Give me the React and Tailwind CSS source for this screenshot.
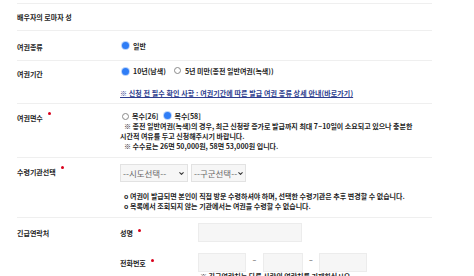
import React from "react";
import { ChevronDown } from "lucide-react";

const font = { fontFamily: '"Noto Sans CJK KR", "Noto Sans", sans-serif' };

function Radio({ checked }) {
  return checked ? (
    <span className="inline-flex w-[7px] h-[7px] rounded-full bg-[#2f7df6] ring-1 ring-[#b9d3fb] shrink-0" />
  ) : (
    <span className="inline-flex w-[7px] h-[7px] rounded-full border border-[#8a8a8a] bg-white shrink-0" />
  );
}

function Dot({ up = 1 }) {
  return (
    <span
      className={
        "inline-block w-[3px] h-[3px] rounded-full bg-[#d9001b] ml-[5px] shrink-0 " +
        (up === 1 ? "mt-[-1px]" : "mt-[-4px]")
      }
    />
  );
}

function Label({ children, req }) {
  return (
    <div className="flex items-start">
      <span>{children}</span>
      {req && <Dot />}
    </div>
  );
}

function Select({ w, text }) {
  return (
    <div
      className={
        "h-[18px] border border-[#e2e2e2] bg-[#f6f6f6] flex items-center justify-between pl-[2px] pr-[2px] " +
        w
      }
    >
      <span className="font-normal text-[#6a6a6a] text-[8.5px] whitespace-nowrap">{text}</span>
      <ChevronDown size={7} strokeWidth={3.5} color="#333" className="shrink-0" />
    </div>
  );
}

export default function App() {
  return (
    <div
      style={font}
      className="w-[474px] h-[276px] overflow-hidden bg-white text-[#1e1e1e] text-[7px] leading-[10px] font-bold"
    >
      <div className="ml-[17px] w-[415px] mt-[3px] border-t border-[#efefef]">
        {/* Row 1 */}
        <div className="h-[27px] flex items-center border-b border-[#efefef]">
          <div className="w-[103px]">배우자의 로마자 성</div>
        </div>

        {/* Row 2 */}
        <div className="h-[30px] flex items-center border-b border-[#efefef]">
          <div className="w-[103px] pt-[3px]">여권종류</div>
          <div className="flex items-center gap-[4px] pl-[2px]">
            <Radio checked />
            <span>일반</span>
          </div>
        </div>

        {/* Row 3 */}
        <div className="h-[43px] flex border-b border-[#efefef]">
          <div className="w-[103px] pt-[8px]">여권기간</div>
          <div className="pt-[5px]">
            <div className="flex items-center pl-[2px]">
              <Radio checked />
              <span className="ml-[4px]">10년(남색)</span>
              <span className="ml-[8px]">
                <Radio />
              </span>
              <span className="ml-[4px]">5년 미만(종전 일반여권(녹색))</span>
            </div>
            <div className="mt-[12px] text-[#2d3d8e] underline underline-offset-1 tracking-[0.1px]">
              ※ 신청 전 필수 확인 사항 : 여권기간에 따른 발급 여권 종류 상세 안내(바로가기)
            </div>
          </div>
        </div>

        {/* Row 4 */}
        <div className="h-[54px] flex border-b border-[#efefef]">
          <div className="w-[103px] pt-[9px]">
            <Label req>여권면수</Label>
          </div>
          <div className="pt-[7px] flex-1">
            <div className="flex items-center pl-[2px]">
              <Radio />
              <span className="ml-[3px]">복수[26]</span>
              <span className="ml-[6px]">
                <Radio checked />
              </span>
              <span className="ml-[3px]">복수[58]</span>
            </div>
            <div className="pl-[4px] whitespace-nowrap">
              ※ 종전 일반여권(녹색)의 경우, 최근 신청량 증가로 발급까지 최대 7~10일이 소요되고 있으나 충분한
            </div>
            <div>시간적 여유를 두고 신청해주시기 바랍니다.</div>
            <div className="pl-[4px]">※ 수수료는 26면 50,000원, 58면 53,000원 입니다.</div>
          </div>
        </div>

        {/* Row 5 */}
        <div className="h-[60px] flex border-b border-[#efefef]">
          <div className="w-[103px] pt-[9px]">
            <Label req>수령기관선택</Label>
          </div>
          <div className="pt-[6px] flex-1">
            <div className="flex gap-[3px]">
              <Select w="w-[68px]" text="--시도선택--" />
              <Select w="w-[55px]" text="--구군선택--" />
            </div>
            <div className="mt-[9px] pl-[4px] whitespace-nowrap">
              o 여권이 발급되면 본인이 직접 방문 수령하셔야 하며, 선택한 수령기관은 추후 변경할 수 없습니다.
            </div>
            <div className="pl-[4px]">o 목록에서 조회되지 않는 기관에서는 여권을 수령할 수 없습니다.</div>
          </div>
        </div>

        {/* Row 6 */}
        <div className="flex">
          <div className="w-[103px] pt-[10px]">긴급연락처</div>
          <div className="pt-[5px] flex-1">
            <div className="flex items-center">
              <div className="w-[78px] flex items-center">
                <span>성명</span>
                <Dot up={2} />
              </div>
              <div className="w-[104px] h-[19px] border border-[#ececec] bg-[#f6f6f6]" />
            </div>
            <div className="flex items-center mt-[11px]">
              <div className="w-[78px] flex items-center">
                <span>전화번호</span>
                <Dot up={2} />
              </div>
              <div className="w-[48px] h-[19px] border border-[#ececec] bg-[#f6f6f6]" />
              <span className="w-[17px] text-center font-normal -mt-[8px]">–</span>
              <div className="w-[40px] h-[19px] border border-[#ececec] bg-[#f6f6f6]" />
              <span className="w-[16px] text-center font-normal -mt-[8px]">–</span>
              <div className="w-[48px] h-[19px] border border-[#ececec] bg-[#f6f6f6]" />
            </div>
            <div className="pl-[80px] leading-[9px]">※ 긴급연락처는 다른 사람의 연락처를 기재하십시오.</div>
          </div>
        </div>
      </div>
    </div>
  );
}
